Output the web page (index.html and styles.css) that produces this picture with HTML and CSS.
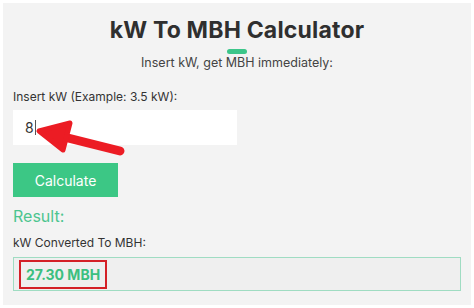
FILE: index.html
```html
<!DOCTYPE html>
<html lang="en">
<head>
  <meta charset="UTF-8" />
  <title>kW To MBH Calculator</title>
  <link rel="stylesheet" href="styles.css">
</head>
<body>
  <div class="panel">
    <h1>kW To MBH Calculator</h1>
    <div class="underline"></div>
    <p class="subtitle">Insert kW, get MBH immediately:</p>

    <label class="label" for="kw">Insert kW (Example: 3.5 kW):</label>
    <div class="input-box" id="kw"><span class="value">8</span><span class="caret"></span></div>

    <button class="calc">Calculate</button>

    <div class="result-title">Result:</div>
    <div class="label">kW Converted To MBH:</div>
    <div class="result-box">
      <span class="result-value">27.30 MBH</span>
    </div>

    <svg class="arrow" width="474" height="308" viewBox="0 0 474 308">
      <line x1="48" y1="133" x2="120" y2="151" stroke="#ec1c24" stroke-width="9" stroke-linecap="round" />
      <polygon points="39,131 70,123 63,150" fill="#ec1c24" stroke="#ec1c24" stroke-width="5" stroke-linejoin="round" />
    </svg>
  </div>
</body>
</html>
```

FILE: styles.css
```css
body { margin: 0; background: #ffffff; font-family: Inter, "Noto Sans", sans-serif; color: #333; }
.panel { position: relative; margin: 3px; height: 302px; background: #f3f3f3; padding: 0 10px; box-sizing: border-box; overflow: hidden; }
h1 { margin: 0; padding-top: 13px; text-align: center; font-size: 23px; font-weight: 700; color: #2f2f2f; line-height: 28px; letter-spacing: 0.2px; }
.underline { width: 20px; height: 5px; border-radius: 3px; background: #3cc68a; margin: 5px auto 0; }
.subtitle { margin: 1px 0 0; text-align: center; font-size: 12.5px; color: #444; line-height: 16px; }
.label { display: block; font-size: 12px; color: #333; line-height: 16px; }
label.label { margin-top: 18px; }
.input-box { width: 224px; height: 35px; background: #fff; margin-top: 5px; display: flex; align-items: center; padding-left: 12px; box-sizing: border-box; font-size: 14px; color: #333; }
.caret { display: inline-block; width: 1px; height: 15px; background: #555; margin-left: 1px; }
.calc { display: block; margin-top: 18px; width: 105px; height: 34px; border: none; background: #3cc785; color: #fff; font-family: inherit; font-size: 14px; padding: 0; }
.result-title { margin-top: 9px; font-size: 16px; color: #4cc58f; line-height: 20px; }
.result-title + .label { margin-top: 9px; }
.result-box { margin-top: 6px; height: 34px; background: #efefef; border: 1px solid #9fdcc2; box-sizing: border-box; display: flex; align-items: center; padding-left: 5px; }
.result-value { display: inline-block; border: 2px solid #d42027; padding: 3px 5px; font-size: 14px; font-weight: 700; color: #3cbf80; line-height: 19px; }
.arrow { position: absolute; left: -3px; top: -3px; pointer-events: none; }
```
